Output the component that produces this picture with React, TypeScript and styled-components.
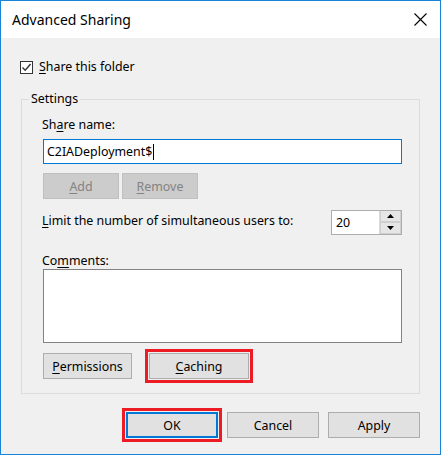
import React from 'react';
import styled, { createGlobalStyle } from 'styled-components';

const GlobalStyle = createGlobalStyle`
  html, body {
    margin: 0;
    padding: 0;
    background: #ffffff;
  }
  body {
    font-family: "Noto Sans", "Open Sans", sans-serif;
    font-size: 12.4px;
    color: #000000;
  }
  * {
    box-sizing: border-box;
  }
`;

const Window = styled.div`
  width: 441px;
  height: 455px;
  border: 1px solid #1883d7;
  display: flex;
  flex-direction: column;
  background: #f0f0f0;
`;

const TitleBar = styled.div`
  height: 37px;
  flex: none;
  background: #ffffff;
  display: flex;
  align-items: center;
  justify-content: space-between;
  padding: 0 13px 0 11px;
  font-size: 14px;
`;

const Title = styled.span`
  line-height: 20px;
`;

const Body = styled.div`
  flex: 1;
  display: flex;
  flex-direction: column;
  padding: 21px 20px 0 20px;
`;

const CheckRow = styled.label`
  display: flex;
  align-items: center;
  gap: 6px;
  height: 16px;
  line-height: 16px;
  margin-left: -1px;
`;

const CheckBox = styled.span`
  width: 13px;
  height: 13px;
  flex: none;
  border: 1px solid #333333;
  background: #ffffff;
  display: flex;
  align-items: center;
  justify-content: center;
`;

const Key = styled.span`
  text-decoration: underline;
  text-underline-offset: 2px;
`;

const Group = styled.fieldset`
  margin: 16px 0 0 0;
  padding: 0;
  min-width: 0;
  border: 1px solid #dcdcdc;
`;

const Legend = styled.legend`
  margin-left: 7px;
  padding: 0 2px;
  line-height: 16px;
`;

const GroupInner = styled.div`
  display: flex;
  flex-direction: column;
  padding: 10px 17px 14px 21px;
`;

const Label = styled.div<{ $top?: number }>`
  line-height: 16px;
  height: 16px;
  margin-top: ${p => p.$top ?? 0}px;
  margin-left: -1px;
`;

const TextBox = styled.div`
  margin-top: 6px;
  height: 25px;
  border: 1px solid #0078d7;
  background: #ffffff;
  display: flex;
  align-items: center;
  padding-left: 3px;
  line-height: 16px;
`;

const Caret = styled.span`
  width: 1px;
  height: 16px;
  background: #000000;
  margin-left: 1px;
`;

const ButtonRow = styled.div<{ $gap: number; $top: number }>`
  display: flex;
  gap: ${p => p.$gap}px;
  margin-top: ${p => p.$top}px;
`;

const Button = styled.button<{ $width: number; $default?: boolean }>`
  width: ${p => p.$width}px;
  height: 26px;
  margin: 0;
  padding: 0;
  font: inherit;
  color: #000000;
  background: #e1e1e1;
  border: ${p => (p.$default ? '2px solid #0078d7' : '1px solid #adadad')};
  &:disabled {
    background: #cccccc;
    border-color: #bfbfbf;
    color: #838383;
  }
`;

const Highlight = styled.div`
  border: 3px solid #ed1c24;
  padding: 1px;
  margin: -4px;
  display: flex;
`;

const LimitRow = styled.div`
  display: flex;
  align-items: center;
  justify-content: space-between;
  margin-top: 11px;
  height: 25px;
`;

const LimitLabel = styled.span`
  line-height: 16px;
  margin-left: -1px;
  margin-top: -4px;
`;

const Spin = styled.div`
  width: 71px;
  height: 25px;
  border: 1px solid #adadad;
  background: #ffffff;
  display: flex;
`;

const SpinValue = styled.span`
  flex: 1;
  padding-left: 4px;
  line-height: 23px;
`;

const SpinButtons = styled.div`
  width: 22px;
  display: flex;
  flex-direction: column;
  border-left: 1px solid #d9d9d9;
  background: #f0f0f0;
`;

const SpinButton = styled.div<{ $up?: boolean }>`
  flex: 1;
  display: flex;
  align-items: center;
  justify-content: center;
  background: #e6e6e6;
  border: 1px solid #cfcfcf;
  border-top-width: ${p => (p.$up ? 0 : 1)}px;
`;

const CommentBox = styled.div`
  margin-top: 0;
  height: 74px;
  border: 1px solid #828282;
  background: #ffffff;
`;

const Footer = styled.div`
  display: flex;
  justify-content: flex-end;
  gap: 9px;
  margin-top: 18px;
`;

const Close = () => (
  <svg width="13" height="13" viewBox="0 0 13 13">
    <path d="M0.5 0.5 L12.5 12.5 M12.5 0.5 L0.5 12.5" stroke="#000" strokeWidth="1.1" fill="none" />
  </svg>
);

const Check = () => (
  <svg width="11" height="11" viewBox="0 0 11 11">
    <path d="M1.5 5.5 L4.2 8.2 L9.6 2" stroke="#333" strokeWidth="1.4" fill="none" />
  </svg>
);

const Arrow = ({ up }: { up?: boolean }) => (
  <svg width="7" height="4" viewBox="0 0 7 4">
    <path d={up ? 'M0 4 L3.5 0 L7 4 Z' : 'M0 0 L3.5 4 L7 0 Z'} fill="#000" />
  </svg>
);

const App = () => {
  return (
    <>
      <GlobalStyle />
      <Window>
        <TitleBar>
          <Title>Advanced Sharing</Title>
          <Close />
        </TitleBar>
        <Body>
          <CheckRow>
            <CheckBox>
              <Check />
            </CheckBox>
            <span><Key>S</Key>hare this folder</span>
          </CheckRow>
          <Group>
            <Legend>Settings</Legend>
            <GroupInner>
              <Label>Sh<Key>a</Key>re name:</Label>
              <TextBox>
                C2IADeployment$
                <Caret />
              </TextBox>
              <ButtonRow $gap={3} $top={9}>
                <Button $width={76} disabled><Key>A</Key>dd</Button>
                <Button $width={76} disabled><Key>R</Key>emove</Button>
              </ButtonRow>
              <LimitRow>
                <LimitLabel><Key>L</Key>imit the number of simultaneous users to:</LimitLabel>
                <Spin>
                  <SpinValue>20</SpinValue>
                  <SpinButtons>
                    <SpinButton $up><Arrow up /></SpinButton>
                    <SpinButton><Arrow /></SpinButton>
                  </SpinButtons>
                </Spin>
              </LimitRow>
              <Label $top={18}>Co<Key>m</Key>ments:</Label>
              <CommentBox />
              <ButtonRow $gap={17} $top={10}>
                <Button $width={89}><Key>P</Key>ermissions</Button>
                <Highlight>
                  <Button $width={100}><Key>C</Key>aching</Button>
                </Highlight>
              </ButtonRow>
            </GroupInner>
          </Group>
          <Footer>
            <Highlight>
              <Button $width={92} $default>OK</Button>
            </Highlight>
            <Button $width={92}>Cancel</Button>
            <Button $width={92}>Apply</Button>
          </Footer>
        </Body>
      </Window>
    </>
  );
};

export default App;
